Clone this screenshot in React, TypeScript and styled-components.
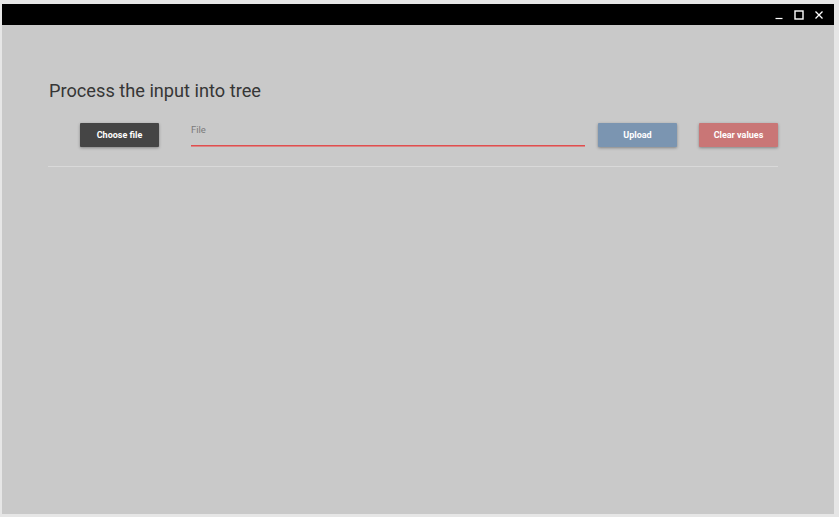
import React from 'react';
import styled, {createGlobalStyle} from 'styled-components';

const GlobalStyle = createGlobalStyle`
  html, body {
    margin: 0;
    padding: 0;
    background: #e6e6e6;
    font-family: Roboto, 'Liberation Sans', Arial, sans-serif;
  }
`;

const Window = styled.div`
  margin: 4px 5px 3px 2px;
  height: 510px;
  display: flex;
  flex-direction: column;
  background: #c9c9c9;
`;

const TitleBar = styled.div`
  height: 21px;
  background: #000;
  display: flex;
  justify-content: flex-end;
  align-items: center;
  padding-right: 9px;
  gap: 8px;
`;

const WinButton = styled.button`
  width: 12px;
  height: 12px;
  padding: 0;
  border: none;
  background: transparent;
  display: flex;
  align-items: center;
  justify-content: center;
  color: #fff;
`;

const Content = styled.main`
  flex: 1;
  padding: 55px 56px 0 45px;
`;

const Heading = styled.h1`
  margin: 0 0 0 2px;
  font-size: 18.2px;
  font-weight: 400;
  color: #363636;
  line-height: 22px;
`;

const Row = styled.div`
  display: flex;
  align-items: flex-end;
  margin-top: 10px;
  padding: 0 0 0 33px;
  height: 35px;
`;

const ActionButton = styled.button<{$bg: string; $gap?: number}>`
  flex: none;
  width: 79px;
  height: 24px;
  margin-left: ${(p) => p.$gap || 0}px;
  border: none;
  border-radius: 1px;
  background: ${(p) => p.$bg};
  color: #fff;
  font-family: Roboto, 'Liberation Sans', Arial, sans-serif;
  font-size: 9px;
  font-weight: 700;
  box-shadow: 0 1px 3px rgba(0, 0, 0, 0.35);
  cursor: pointer;
`;

const Field = styled.label`
  flex: 1;
  margin: 0 0 0 32px;
  display: flex;
  flex-direction: column;
  align-self: stretch;
  justify-content: flex-end;
`;

const FieldLabel = styled.span`
  font-size: 9.5px;
  color: #7a7a7a;
  margin-bottom: 10px;
`;

const Underline = styled.span`
  display: block;
  height: 2px;
  margin-right: -1px;
  background: linear-gradient(#e04e4e, #e04e4e 50%, #d98686 50%);
`;

const Divider = styled.hr`
  margin: 19px 0 0 1px;
  width: 730px;
  border: none;
  height: 1px;
  background: #d9d9d9;
`;

const App = () => {
  return (
    <>
      <GlobalStyle />
      <Window>
        <TitleBar>
          <WinButton aria-label="minimize">
            <svg width="10" height="10" viewBox="0 0 10 10">
              <line x1="1.5" y1="8.5" x2="8.5" y2="8.5" stroke="#fff" strokeWidth="1.2" />
            </svg>
          </WinButton>
          <WinButton aria-label="maximize">
            <svg width="10" height="10" viewBox="0 0 10 10">
              <rect x="1" y="1" width="8" height="8" fill="none" stroke="#fff" strokeWidth="1.4" />
            </svg>
          </WinButton>
          <WinButton aria-label="close">
            <svg width="10" height="10" viewBox="0 0 10 10">
              <path d="M1.5 1.5 L8.5 8.5 M8.5 1.5 L1.5 8.5" stroke="#fff" strokeWidth="1.3" />
            </svg>
          </WinButton>
        </TitleBar>
        <Content>
          <Heading>Process the input into tree</Heading>
          <Row>
            <ActionButton $bg="#454545">Choose file</ActionButton>
            <Field>
              <FieldLabel>File</FieldLabel>
              <Underline />
            </Field>
            <ActionButton $bg="#7b95b1" $gap={14}>Upload</ActionButton>
            <ActionButton $bg="#c97676" $gap={22}>Clear values</ActionButton>
          </Row>
          <Divider />
        </Content>
      </Window>
    </>
  );
};

export default App;
